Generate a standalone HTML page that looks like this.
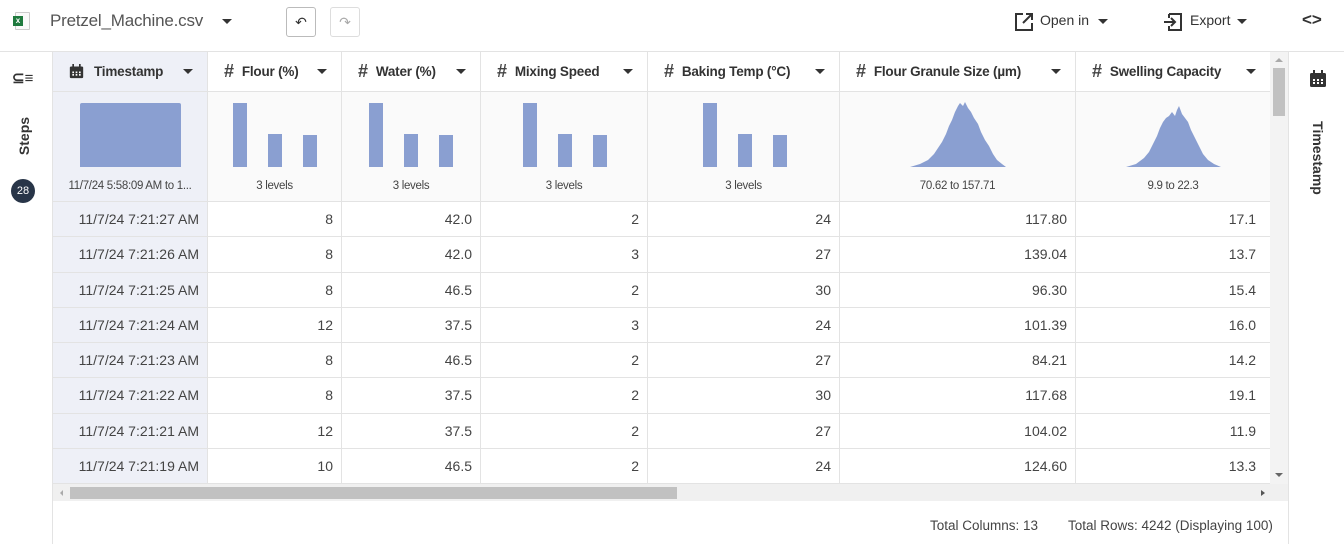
<!DOCTYPE html>
<html><head><meta charset="utf-8"><style>
*{box-sizing:border-box;margin:0;padding:0}
body{width:1344px;height:544px;background:#fff;font-family:"Liberation Sans",sans-serif;color:#333;position:relative;overflow:hidden;font-size:13px}
.a{position:absolute}
.hd{position:absolute;top:52px;height:40px;border-right:1px solid #e3e3e3;border-bottom:1px solid #e3e3e3;font-weight:bold;font-size:13.5px;color:#333;display:flex;align-items:center;padding-left:16px;letter-spacing:-0.2px}
.hd .h{font-size:18px;margin-right:8px;font-weight:bold;color:#444}
.hd .c{position:absolute;right:14px;top:17px;width:0;height:0;border-left:5px solid transparent;border-right:5px solid transparent;border-top:5px solid #333}
.sm{position:absolute;top:92px;height:110px;border-right:1px solid #e3e3e3;border-bottom:1px solid #e3e3e3;background:#fafafa}
.sm .t{position:absolute;bottom:9px;left:0;right:0;text-align:center;font-size:11.5px;color:#444;letter-spacing:-0.3px}
.cell{position:absolute;height:35.25px;border-right:1px solid #e3e3e3;border-bottom:1px solid #e3e3e3;text-align:right;padding-right:8px;line-height:35px;font-size:14px;color:#444;letter-spacing:0}
.bar{position:absolute;background:#8a9fd1}
</style></head><body>
<div class="a" style="left:15px;top:12px;width:15px;height:18px;border:1px solid #ccc;border-radius:1px;background:#fafafa"></div>
<div class="a" style="left:13px;top:16px;width:10px;height:10px;background:#1f7a3e;color:#fff;font-size:8px;font-weight:bold;text-align:center;line-height:10px">x</div>
<div class="a" style="left:50px;top:11px;font-size:17px;color:#555;letter-spacing:-0.2px">Pretzel_Machine.csv</div>
<div class="a" style="left:222px;top:19px;border-left:5px solid transparent;border-right:5px solid transparent;border-top:5px solid #333"></div>
<div class="a" style="left:286px;top:7px;width:30px;height:30px;border:1px solid #bbb;border-radius:3px;text-align:center;line-height:28px;font-size:14px;color:#333">↶</div>
<div class="a" style="left:330px;top:7px;width:30px;height:30px;border:1px solid #ddd;border-radius:3px;text-align:center;line-height:28px;font-size:14px;color:#aaa">↷</div>
<svg class="a" style="left:1014px;top:12px" width="20" height="20" viewBox="0 0 20 20" fill="none" stroke="#333" stroke-width="2"><path d="M9 2H2v16h16v-7"/><path d="M12 2h6v6M18 2l-9 9"/></svg>
<div class="a" style="left:1040px;top:12px;font-size:14px;color:#333">Open in</div>
<div class="a" style="left:1098px;top:19px;border-left:5px solid transparent;border-right:5px solid transparent;border-top:5px solid #333"></div>
<svg class="a" style="left:1163px;top:12px" width="20" height="20" viewBox="0 0 20 20" fill="none" stroke="#333" stroke-width="2"><path d="M6 2h12v16H6v-4M6 6V2"/><path d="M1 10h10M8 6l4 4-4 4"/></svg>
<div class="a" style="left:1190px;top:12px;font-size:14px;color:#333">Export</div>
<div class="a" style="left:1237px;top:19px;border-left:5px solid transparent;border-right:5px solid transparent;border-top:5px solid #333"></div>
<div class="a" style="left:1302px;top:10px;font-size:17px;font-weight:bold;color:#333">&lt;&gt;</div>
<div class="a" style="left:0;top:51px;width:1344px;height:1px;background:#e3e3e3"></div>
<div class="a" style="left:52px;top:52px;width:1px;height:492px;background:#e3e3e3"></div>
<div class="a" style="left:12px;top:69px;font-size:15px;font-weight:bold;color:#333">⊆≡</div>
<div class="a" style="left:2px;top:128px;width:44px;transform:rotate(-90deg);transform-origin:center;font-weight:bold;font-size:14px;color:#333;text-align:center">Steps</div>
<div class="a" style="left:11px;top:179px;width:24px;height:24px;border-radius:12px;background:#283548;color:#fff;font-size:11px;text-align:center;line-height:24px">28</div>
<div class="a" style="left:1288px;top:52px;width:1px;height:492px;background:#e3e3e3"></div>
<svg class="a" style="left:1309px;top:70px" width="18" height="18" viewBox="0 0 18 18"><rect x="1" y="3" width="16" height="14" rx="1.5" fill="#333"/><rect x="4" y="0" width="2" height="4" fill="#333"/><rect x="12" y="0" width="2" height="4" fill="#333"/><g fill="#fff"><rect x="4" y="9" width="2" height="2"/><rect x="8" y="9" width="2" height="2"/><rect x="12" y="9" width="2" height="2"/><rect x="4" y="12" width="2" height="2"/><rect x="8" y="12" width="2" height="2"/><rect x="12" y="12" width="2" height="2"/></g></svg>
<div class="a" style="left:1268px;top:150px;width:100px;transform:rotate(90deg);transform-origin:center;font-weight:bold;font-size:14px;color:#333;text-align:center">Timestamp</div>
<div class="hd" style="left:53px;width:155px;background:#eef0f7"><svg width="15" height="15" viewBox="0 0 18 18" style="margin-right:10px"><rect x="1" y="3" width="16" height="14" rx="1.5" fill="#333"/><rect x="4" y="0" width="2" height="4" fill="#333"/><rect x="12" y="0" width="2" height="4" fill="#333"/><g fill="#fff"><rect x="4" y="9" width="2" height="2"/><rect x="8" y="9" width="2" height="2"/><rect x="12" y="9" width="2" height="2"/><rect x="4" y="12" width="2" height="2"/><rect x="8" y="12" width="2" height="2"/><rect x="12" y="12" width="2" height="2"/></g></svg>Timestamp<span class="c"></span></div>
<div class="hd" style="left:208px;width:134px"><span class="h">#</span>Flour (%)<span class="c"></span></div>
<div class="hd" style="left:342px;width:139px"><span class="h">#</span>Water (%)<span class="c"></span></div>
<div class="hd" style="left:481px;width:167px"><span class="h">#</span>Mixing Speed<span class="c"></span></div>
<div class="hd" style="left:648px;width:192px"><span class="h">#</span>Baking Temp (°C)<span class="c"></span></div>
<div class="hd" style="left:840px;width:236px"><span class="h">#</span>Flour Granule Size (µm)<span class="c"></span></div>
<div class="hd" style="left:1076px;width:194px;border-right:none"><span class="h">#</span>Swelling Capacity<span class="c"></span></div>
<div class="sm" style="left:53px;width:155px;background:#eef0f7"><div class="t">11/7/24 5:58:09 AM to 1...</div></div>
<div class="bar" style="left:80px;top:103px;width:101px;height:64px;border-radius:2px 2px 0 0"></div>
<div class="sm" style="left:208px;width:134px"><div class="t">3 levels</div></div>
<div class="sm" style="left:342px;width:139px"><div class="t">3 levels</div></div>
<div class="sm" style="left:481px;width:167px"><div class="t">3 levels</div></div>
<div class="sm" style="left:648px;width:192px"><div class="t">3 levels</div></div>
<div class="sm" style="left:840px;width:236px"><div class="t">70.62 to 157.71</div></div>
<div class="sm" style="left:1076px;width:194px;border-right:none"><div class="t">9.9 to 22.3</div></div>
<div class="bar" style="left:233px;top:103px;width:14px;height:64px"></div><div class="bar" style="left:268px;top:134px;width:14px;height:33px"></div><div class="bar" style="left:303px;top:135px;width:14px;height:32px"></div>
<div class="bar" style="left:369px;top:103px;width:14px;height:64px"></div><div class="bar" style="left:404px;top:134px;width:14px;height:33px"></div><div class="bar" style="left:439px;top:135px;width:14px;height:32px"></div>
<div class="bar" style="left:523px;top:103px;width:14px;height:64px"></div><div class="bar" style="left:558px;top:134px;width:14px;height:33px"></div><div class="bar" style="left:593px;top:135px;width:14px;height:32px"></div>
<div class="bar" style="left:703px;top:103px;width:14px;height:64px"></div><div class="bar" style="left:738px;top:134px;width:14px;height:33px"></div><div class="bar" style="left:773px;top:135px;width:14px;height:32px"></div>
<svg class="a" style="left:908px;top:100px" width="100" height="68"><path fill="#8a9fd1" d="M2 67L12 64L20 60L26 54L30 48L34 42L38 34L41 26L44 20L47 12L50 6L52 3L55 6L57 2L60 8L63 12L66 18L70 24L73 32L77 40L81 46L85 54L89 60L94 64L98 67Z"/></svg>
<svg class="a" style="left:1124px;top:100px" width="100" height="68"><path fill="#8a9fd1" d="M2 67L12 64L20 58L25 52L29 44L33 36L36 28L39 22L42 18L45 16L48 12L51 16L53 10L55 6L58 14L61 18L64 22L67 30L71 38L75 46L79 54L84 60L90 64L97 67Z"/></svg>
<div id="rows"></div>
<script>
var d=[["11/7/24 7:21:27 AM","8","42.0","2","24","117.80","17.1"],["11/7/24 7:21:26 AM","8","42.0","3","27","139.04","13.7"],["11/7/24 7:21:25 AM","8","46.5","2","30","96.30","15.4"],["11/7/24 7:21:24 AM","12","37.5","3","24","101.39","16.0"],["11/7/24 7:21:23 AM","8","46.5","2","27","84.21","14.2"],["11/7/24 7:21:22 AM","8","37.5","2","30","117.68","19.1"],["11/7/24 7:21:21 AM","12","37.5","2","27","104.02","11.9"],["11/7/24 7:21:19 AM","10","46.5","2","24","124.60","13.3"]];
var L=[53,208,342,481,648,840,1076],W=[155,134,139,167,192,236,194],h="";
d.forEach(function(r,i){r.forEach(function(v,j){h+='<div class="cell" style="top:'+(202+i*35.25)+'px;left:'+L[j]+'px;width:'+W[j]+'px;'+(j==0?'background:#eef0f7;':'')+(j==6?'border-right:none;padding-right:14px;':'')+'">'+v+'</div>';});});
document.getElementById('rows').innerHTML=h;
</script>
<div class="a" style="left:1270px;top:52px;width:18px;height:432px;background:#f3f3f3"></div>
<div class="a" style="left:1273px;top:68px;width:12px;height:48px;background:#c1c1c1"></div>
<div class="a" style="left:1275px;top:58px;border-left:4px solid transparent;border-right:4px solid transparent;border-bottom:4px solid #aaa"></div>
<div class="a" style="left:1275px;top:473px;border-left:4px solid transparent;border-right:4px solid transparent;border-top:4px solid #666"></div>
<div class="a" style="left:53px;top:484px;width:1235px;height:17px;background:#f0f0f0"></div>
<div class="a" style="left:70px;top:487px;width:607px;height:12px;background:#c1c1c1"></div>
<div class="a" style="left:60px;top:490px;border-top:3px solid transparent;border-bottom:3px solid transparent;border-right:3px solid #aaa"></div>
<div class="a" style="left:1261px;top:490px;border-top:3px solid transparent;border-bottom:3px solid transparent;border-left:4px solid #555"></div>
<div class="a" style="left:930px;top:518px;font-size:13.5px;color:#444">Total Columns: 13</div>
<div class="a" style="left:1068px;top:518px;font-size:13.5px;color:#444">Total Rows: 4242 (Displaying 100)</div>
</body></html>
